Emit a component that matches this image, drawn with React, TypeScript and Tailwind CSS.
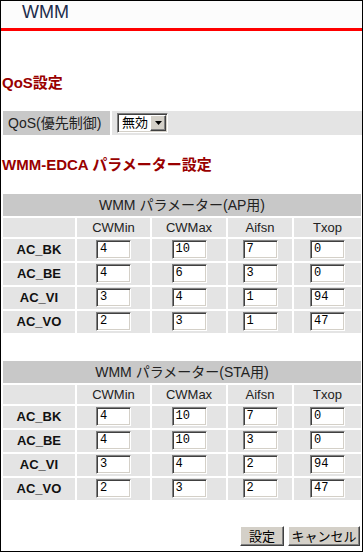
import React from "react";

type Row = { name: string; v: [string, string, string, string] };

const apRows: Row[] = [
  { name: "AC_BK", v: ["4", "10", "7", "0"] },
  { name: "AC_BE", v: ["4", "6", "3", "0"] },
  { name: "AC_VI", v: ["3", "4", "1", "94"] },
  { name: "AC_VO", v: ["2", "3", "1", "47"] },
];

const staRows: Row[] = [
  { name: "AC_BK", v: ["4", "10", "7", "0"] },
  { name: "AC_BE", v: ["4", "10", "3", "0"] },
  { name: "AC_VI", v: ["3", "4", "2", "94"] },
  { name: "AC_VO", v: ["2", "3", "2", "47"] },
];

function Field({ value }: { value: string }) {
  return (
    <div className="w-[35px] h-[19px] bg-white border border-t-[#808080] border-l-[#808080] border-r-white border-b-white shadow-[inset_1px_1px_0_#404040,inset_-1px_-1px_0_#d4d0c8] pl-[3px] text-[12px] leading-[17px] text-black font-['Liberation_Mono',monospace]">
      {value}
    </div>
  );
}

function ParamTable({ title, rows }: { title: string; rows: Row[] }) {
  const heads = ["CWMin", "CWMax", "Aifsn", "Txop"];
  return (
    <div className="grid grid-cols-[72px_73px_74px_64px_67px] gap-[2px]">
      <div className="col-span-5 h-[22px] bg-[#c8c8c8] flex items-center justify-center text-[14px] text-[#222]">
        {title}
      </div>
      <div className="h-[19px] bg-[#e4e4e4]" />
      {heads.map((h) => (
        <div key={h} className="h-[19px] bg-[#e4e4e4] flex items-center justify-center text-[13px] text-[#222]">
          {h}
        </div>
      ))}
      {rows.map((r) => (
        <React.Fragment key={r.name}>
          <div className="h-[22px] bg-[#e4e4e4] flex items-center justify-center text-[13px] font-bold text-[#111]">
            {r.name}
          </div>
          {r.v.map((val, i) => (
            <div key={i} className="h-[22px] bg-[#e4e4e4] flex items-start justify-center pt-[1px]">
              <Field value={val} />
            </div>
          ))}
        </React.Fragment>
      ))}
    </div>
  );
}

function Btn({ children, w }: { children: React.ReactNode; w: string }) {
  return (
    <div
      className={`${w} h-[20px] bg-[#d4d0c8] border border-t-white border-l-white border-r-[#404040] border-b-[#404040] shadow-[inset_-1px_-1px_0_#808080] flex items-center justify-center text-[13px] text-black font-['Noto_Sans_CJK_JP',sans-serif]`}
    >
      {children}
    </div>
  );
}

export default function App() {
  return (
    <div className="w-[363px] h-[552px] border border-black bg-white flex flex-col font-['Liberation_Sans','Noto_Sans_CJK_JP',sans-serif] overflow-hidden">
      <div className="h-[27px] bg-[#fcfcfc] pl-[21px] text-[18px] leading-[23px] text-[#1c2c4c]">WMM</div>
      <div className="h-[3px] bg-[#ff0000]" />

      <div className="mt-[43px] pl-[1px] text-[15px] leading-[17px] font-bold text-[#990000]">QoS設定</div>

      <div className="mt-[20px] pl-[2px] flex gap-[2px] h-[24px]">
        <div className="w-[107px] bg-[#c8c8c8] flex items-center pl-[5px] text-[14px] text-[#222]">QoS(優先制御)</div>
        <div className="flex-1 bg-[#e4e4e4] flex items-center pl-[5px]">
          <div className="w-[51px] h-[20px] bg-white border border-t-[#808080] border-l-[#808080] border-r-white border-b-white shadow-[inset_1px_1px_0_#404040,inset_-1px_-1px_0_#d4d0c8] flex items-stretch p-[1px]">
            <div className="flex-1 pl-[3px] text-[13px] leading-[16px] text-black">無効</div>
            <div className="w-[16px] bg-[#d4d0c8] border border-t-white border-l-white border-r-[#404040] border-b-[#404040] shadow-[inset_-1px_-1px_0_#808080] flex items-center justify-center">
              <svg width="7" height="4" viewBox="0 0 7 4">
                <path d="M0 0H7L3.5 4Z" fill="#000" />
              </svg>
            </div>
          </div>
        </div>
      </div>

      <div className="mt-[21px] pl-[1px] text-[15px] leading-[17px] font-bold text-[#990000]">WMM-EDCA パラメーター設定</div>

      <div className="mt-[21px] pl-[2px]">
        <ParamTable title="WMM パラメーター(AP用)" rows={apRows} />
      </div>

      <div className="mt-[28px] pl-[2px]">
        <ParamTable title="WMM パラメーター(STA用)" rows={staRows} />
      </div>

      <div className="mt-[26px] flex justify-end gap-[4px] pr-[2px]">
        <Btn w="w-[44px]">設定</Btn>
        <Btn w="w-[72px]">キャンセル</Btn>
      </div>
    </div>
  );
}
